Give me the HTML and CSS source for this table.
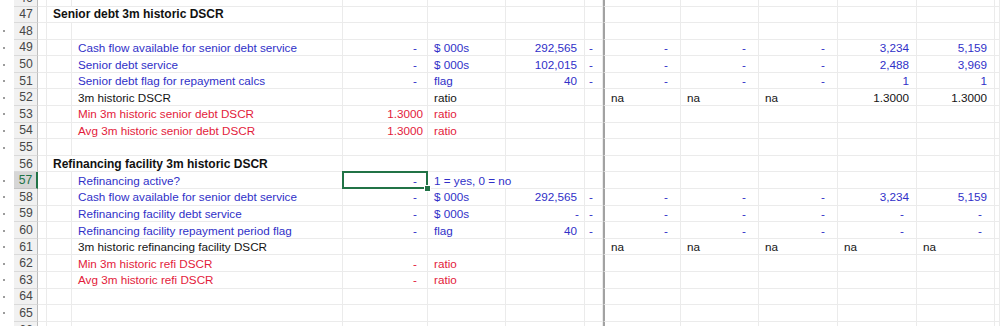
FILE: index.html
```html
<!DOCTYPE html>
<html>
<head>
<meta charset="utf-8">
<link rel="stylesheet" href="styles.css">
</head>
<body>
<div class="sheet">
<div class="rows">
  <div class="row"><div class="gut"></div><div class="hdr">46</div><div class="c"></div><div class="c"></div><div class="c"></div><div class="c"></div><div class="c"></div><div class="c"></div><div class="c"></div><div class="c fz"></div><div class="c"></div><div class="c"></div><div class="c"></div><div class="c"></div><div class="c"></div></div>

  <div class="row"><div class="gut"></div><div class="hdr">47</div><div class="c"></div><div class="c title">Senior debt 3m historic DSCR</div><div class="c"></div><div class="c"></div><div class="c"></div><div class="c"></div><div class="c fz"></div><div class="c"></div><div class="c"></div><div class="c"></div><div class="c"></div><div class="c"></div></div>

  <div class="row"><div class="gut"><i></i></div><div class="hdr">48</div><div class="c"></div><div class="c"></div><div class="c"></div><div class="c"></div><div class="c"></div><div class="c"></div><div class="c"></div><div class="c fz"></div><div class="c"></div><div class="c"></div><div class="c"></div><div class="c"></div><div class="c"></div></div>

  <div class="row blue"><div class="gut"><i></i></div><div class="hdr">49</div><div class="c"></div><div class="c"></div><div class="c lbl">Cash flow available for senior debt service</div><div class="c e-d">-</div><div class="c txt">$ 000s</div><div class="c g-n">292,565</div><div class="c h-d">-</div><div class="c fz t-d">-</div><div class="c t-d">-</div><div class="c t-d">-</div><div class="c t-n">3,234</div><div class="c t-n">5,159</div><div class="c"></div></div>

  <div class="row blue"><div class="gut"><i></i></div><div class="hdr">50</div><div class="c"></div><div class="c"></div><div class="c lbl">Senior debt service</div><div class="c e-d">-</div><div class="c txt">$ 000s</div><div class="c g-n">102,015</div><div class="c h-d">-</div><div class="c fz t-d">-</div><div class="c t-d">-</div><div class="c t-d">-</div><div class="c t-n">2,488</div><div class="c t-n">3,969</div><div class="c"></div></div>

  <div class="row blue"><div class="gut"><i></i></div><div class="hdr">51</div><div class="c"></div><div class="c"></div><div class="c lbl">Senior debt flag for repayment calcs</div><div class="c e-d">-</div><div class="c txt">flag</div><div class="c g-n">40</div><div class="c h-d">-</div><div class="c fz t-d">-</div><div class="c t-d">-</div><div class="c t-d">-</div><div class="c t-n">1</div><div class="c t-n">1</div><div class="c"></div></div>

  <div class="row blk"><div class="gut"><i></i></div><div class="hdr">52</div><div class="c"></div><div class="c"></div><div class="c lbl">3m historic DSCR</div><div class="c"></div><div class="c txt">ratio</div><div class="c"></div><div class="c"></div><div class="c fz txt">na</div><div class="c txt">na</div><div class="c txt">na</div><div class="c t-n">1.3000</div><div class="c t-n">1.3000</div><div class="c"></div></div>

  <div class="row red"><div class="gut"><i></i></div><div class="hdr">53</div><div class="c"></div><div class="c"></div><div class="c lbl">Min 3m historic senior debt DSCR</div><div class="c e-n">1.3000</div><div class="c txt">ratio</div><div class="c"></div><div class="c"></div><div class="c fz"></div><div class="c"></div><div class="c"></div><div class="c"></div><div class="c"></div><div class="c"></div></div>

  <div class="row red"><div class="gut"><i></i></div><div class="hdr">54</div><div class="c"></div><div class="c"></div><div class="c lbl">Avg 3m historic senior debt DSCR</div><div class="c e-n">1.3000</div><div class="c txt">ratio</div><div class="c"></div><div class="c"></div><div class="c fz"></div><div class="c"></div><div class="c"></div><div class="c"></div><div class="c"></div><div class="c"></div></div>

  <div class="row"><div class="gut"><i></i></div><div class="hdr">55</div><div class="c"></div><div class="c"></div><div class="c"></div><div class="c"></div><div class="c"></div><div class="c"></div><div class="c"></div><div class="c fz"></div><div class="c"></div><div class="c"></div><div class="c"></div><div class="c"></div><div class="c"></div></div>

  <div class="row"><div class="gut"></div><div class="hdr">56</div><div class="c"></div><div class="c title">Refinancing facility 3m historic DSCR</div><div class="c"></div><div class="c"></div><div class="c"></div><div class="c"></div><div class="c fz"></div><div class="c"></div><div class="c"></div><div class="c"></div><div class="c"></div><div class="c"></div></div>

  <div class="row blue"><div class="gut"><i></i></div><div class="hdr sel">57</div><div class="c"></div><div class="c"></div><div class="c lbl">Refinancing active?</div><div class="c e-d active">-</div><div class="c txt span2">1 = yes, 0 = no</div><div class="c"></div><div class="c fz"></div><div class="c"></div><div class="c"></div><div class="c"></div><div class="c"></div><div class="c"></div></div>

  <div class="row blue"><div class="gut"><i></i></div><div class="hdr">58</div><div class="c"></div><div class="c"></div><div class="c lbl">Cash flow available for senior debt service</div><div class="c e-d">-</div><div class="c txt">$ 000s</div><div class="c g-n">292,565</div><div class="c h-d">-</div><div class="c fz t-d">-</div><div class="c t-d">-</div><div class="c t-d">-</div><div class="c t-n">3,234</div><div class="c t-n">5,159</div><div class="c"></div></div>

  <div class="row blue"><div class="gut"><i></i></div><div class="hdr">59</div><div class="c"></div><div class="c"></div><div class="c lbl">Refinancing facility debt service</div><div class="c e-d">-</div><div class="c txt">$ 000s</div><div class="c g-d">-</div><div class="c h-d">-</div><div class="c fz t-d">-</div><div class="c t-d">-</div><div class="c t-d">-</div><div class="c t-d">-</div><div class="c t-d">-</div><div class="c"></div></div>

  <div class="row blue"><div class="gut"><i></i></div><div class="hdr">60</div><div class="c"></div><div class="c"></div><div class="c lbl">Refinancing facility repayment period flag</div><div class="c e-d">-</div><div class="c txt">flag</div><div class="c g-n">40</div><div class="c h-d">-</div><div class="c fz t-d">-</div><div class="c t-d">-</div><div class="c t-d">-</div><div class="c t-d">-</div><div class="c t-d">-</div><div class="c"></div></div>

  <div class="row blk"><div class="gut"><i></i></div><div class="hdr">61</div><div class="c"></div><div class="c"></div><div class="c lbl">3m historic refinancing facility DSCR</div><div class="c"></div><div class="c"></div><div class="c"></div><div class="c"></div><div class="c fz txt">na</div><div class="c txt">na</div><div class="c txt">na</div><div class="c txt">na</div><div class="c txt">na</div><div class="c"></div></div>

  <div class="row red"><div class="gut"><i></i></div><div class="hdr">62</div><div class="c"></div><div class="c"></div><div class="c lbl">Min 3m historic refi DSCR</div><div class="c e-d">-</div><div class="c txt">ratio</div><div class="c"></div><div class="c"></div><div class="c fz"></div><div class="c"></div><div class="c"></div><div class="c"></div><div class="c"></div><div class="c"></div></div>

  <div class="row red"><div class="gut"><i></i></div><div class="hdr">63</div><div class="c"></div><div class="c"></div><div class="c lbl">Avg 3m historic refi DSCR</div><div class="c e-d">-</div><div class="c txt">ratio</div><div class="c"></div><div class="c"></div><div class="c fz"></div><div class="c"></div><div class="c"></div><div class="c"></div><div class="c"></div><div class="c"></div></div>

  <div class="row"><div class="gut"><i></i></div><div class="hdr">64</div><div class="c"></div><div class="c"></div><div class="c"></div><div class="c"></div><div class="c"></div><div class="c"></div><div class="c"></div><div class="c fz"></div><div class="c"></div><div class="c"></div><div class="c"></div><div class="c"></div><div class="c"></div></div>

  <div class="row"><div class="gut"><i></i></div><div class="hdr">65</div><div class="c"></div><div class="c"></div><div class="c"></div><div class="c"></div><div class="c"></div><div class="c"></div><div class="c"></div><div class="c fz"></div><div class="c"></div><div class="c"></div><div class="c"></div><div class="c"></div><div class="c"></div></div>

  <div class="row"><div class="gut"><i></i></div><div class="hdr">66</div><div class="c"></div><div class="c"></div><div class="c"></div><div class="c"></div><div class="c"></div><div class="c"></div><div class="c"></div><div class="c fz"></div><div class="c"></div><div class="c"></div><div class="c"></div><div class="c"></div><div class="c"></div></div>
</div>
</div>
</body>
</html>
```

FILE: styles.css
```css
* { box-sizing: border-box; }
html, body { margin: 0; padding: 0; background: #ffffff; }
body {
  font-family: "Liberation Sans", Arial, sans-serif;
  font-size: 11.7px;
  color: #161616;
}
.sheet { width: 1000px; height: 326px; overflow: hidden; }
.rows { margin-top: -10.1px; }
.row {
  display: grid;
  grid-template-columns: 14px 24px 9px 25px 271px 85px 78px 79px 18px 78px 78px 79px 79px 78px 1fr;
  height: 16.6px;
}
.row > div {
  min-width: 0;
  white-space: nowrap;
  display: flex;
  align-items: center;
}
.c {
  border-right: 1px solid #ebebeb;
  border-bottom: 1px solid #ebebeb;
}
.gut { background: #ffffff; }
.gut i {
  display: block;
  width: 2px;
  height: 2px;
  margin-left: 3px;
  background: #9c9c9c;
}
.hdr {
  justify-content: center;
  background: #f1f1f1;
  color: #474747;
  font-size: 12.2px;
  border-bottom: 1px solid #dadada;
  border-right: 1px solid #bdbdbd;
  padding-left: 1px;
}
.hdr.sel {
  background: #d6d6d6;
  color: #217346;
  border-right: 2px solid #217346;
  border-bottom-color: #c4c4c4;
}
.fz { border-left: 2px solid #a2a2a2; }
.title {
  grid-column: span 2;
  font-weight: bold;
  font-size: 12px;
  color: #111111;
  padding-left: 6px;
}
.lbl { padding-left: 6px; }
.txt { padding-left: 6px; }
.span2 { grid-column: span 2; }
.e-d, .e-n, .g-n, .g-d, .t-n, .t-d { justify-content: flex-end; }
.e-d { padding-right: 10px; }
.e-n { padding-right: 4px; }
.g-n { padding-right: 7px; }
.g-d { padding-right: 5px; }
.t-n { padding-right: 7px; }
.t-d { padding-right: 12px; }
.h-d { padding-left: 4px; }
.blue { color: #3030c8; }
.red { color: #e31b3b; }
.blk { color: #141414; }
.active { position: relative; }
.active::after {
  content: "";
  position: absolute;
  left: -1px;
  top: -1px;
  right: -1px;
  bottom: -1px;
  border: 2px solid #217346;
}
.active::before {
  content: "";
  position: absolute;
  right: -4px;
  bottom: -4px;
  width: 5px;
  height: 5px;
  background: #217346;
  border: 1px solid #ffffff;
  z-index: 1;
}
```
